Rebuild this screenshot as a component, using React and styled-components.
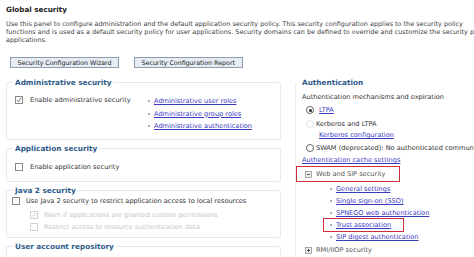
import React from "react";
import styled, { createGlobalStyle } from "styled-components";

const Global = createGlobalStyle`
  html, body {
    margin: 0;
    background: #fff;
    overflow: hidden;
  }
  body {
    font-family: "DejaVu Sans", Verdana, sans-serif;
    font-size: 6.6px;
    line-height: 8px;
    color: #333;
  }
`;

const Check = ({ checked, disabled }) => (
  <Box $disabled={disabled}>
    {checked && (
      <svg width="6" height="6" viewBox="0 0 6 6">
        <path d="M0.8 3.2 L2.3 4.7 L5.2 1" fill="none" stroke={disabled ? "#c4c4c4" : "#555"} strokeWidth="0.9" />
      </svg>
    )}
  </Box>
);

const Toggle = ({ open }) => (
  <Tog>
    <svg width="7" height="7" viewBox="0 0 7 7">
      <rect x="0.5" y="0.5" width="6" height="6" fill="#eee" stroke="#888" strokeWidth="0.7" />
      <path d="M2 3.5 H5" stroke="#333" strokeWidth="0.8" />
      {!open && <path d="M3.5 2 V5" stroke="#333" strokeWidth="0.8" />}
    </svg>
  </Tog>
);

const App = () => {
  return (
    <Page>
      <Global />
      <Title>Global security</Title>
      <Desc>
        Use this panel to configure administration and the default application security policy. This security configuration applies to the security policy
        <br />
        functions and is used as a default security policy for user applications. Security domains can be defined to override and customize the security policies for user
        <br />
        applications.
      </Desc>
      <Buttons>
        <Button>Security Configuration Wizard</Button>
        <Button>Security Configuration Report</Button>
      </Buttons>
      <Columns>
        <Left>
          <Panel $h={58}>
            <Legend>Administrative security</Legend>
            <AdminRow>
              <Item $w={133}>
                <Check checked />
                <span>Enable administrative security</span>
              </Item>
              <LinkList>
                <LinkItem><Bullet /><A>Administrative user roles</A></LinkItem>
                <LinkItem><Bullet /><A>Administrative group roles</A></LinkItem>
                <LinkItem><Bullet /><A>Administrative authentication</A></LinkItem>
              </LinkList>
            </AdminRow>
          </Panel>
          <Panel $h={34}>
            <Legend>Application security</Legend>
            <Item $top={10}>
              <Check />
              <span>Enable application security</span>
            </Item>
          </Panel>
          <Panel $h={48}>
            <Legend>Java 2 security</Legend>
            <Item $top={2} $left={-3} $gap={6}>
              <Check />
              <span>Use Java 2 security to restrict application access to local resources</span>
            </Item>
            <Item $top={6} $left={15} $gap={6} $muted>
              <Check checked disabled />
              <span>Warn if applications are granted custom permissions</span>
            </Item>
            <Item $top={4} $left={15} $gap={6} $muted>
              <Check disabled />
              <span>Restrict access to resource authentication data</span>
            </Item>
          </Panel>
          <Panel $h={20}>
            <Legend>User account repository</Legend>
          </Panel>
        </Left>
        <Right>
          <Legend>Authentication</Legend>
          <Plain $top={6}>Authentication mechanisms and expiration</Plain>
          <Radio $top={5} $gap={5}><Dot $on /><A>LTPA</A></Radio>
          <Radio $top={6} $gap={2}><Dot $faint /><span>Kerberos and LTPA</span></Radio>
          <Plain $top={3} $left={17}><A>Kerberos configuration</A></Plain>
          <Radio $top={5} $gap={2}><Dot /><span>SWAM (deprecated): No authenticated communication between servers</span></Radio>
          <Plain $top={4}><A>Authentication cache settings</A></Plain>
          <Node $top={3} $boxed><Toggle open /><span>Web and SIP security</span></Node>
          <SubList>
            <LinkItem><Bullet /><A>General settings</A></LinkItem>
            <LinkItem><Bullet /><A>Single sign-on (SSO)</A></LinkItem>
            <LinkItem><Bullet /><A>SPNEGO web authentication</A></LinkItem>
            <LinkItem $boxed><Bullet /><A>Trust association</A></LinkItem>
            <LinkItem><Bullet /><A>SIP digest authentication</A></LinkItem>
          </SubList>
          <Node $top={5}><Toggle /><span>RMI/IIOP security</span></Node>
        </Right>
      </Columns>
    </Page>
  );
};

export default App;

const Page = styled.div`
  padding: 6px 0 0 6px;
  width: 560px;
`;

const Title = styled.div`
  font-weight: bold;
  font-size: 7.2px;
  line-height: 8px;
  color: #222;
`;

const Desc = styled.p`
  margin: 6px 0 0;
  white-space: nowrap;
  font-size: 6.45px;
  line-height: 8px;
  color: #444;
`;

const Buttons = styled.div`
  display: flex;
  gap: 15px;
  margin: 13px 0 0 4px;
`;

const Button = styled.div`
  height: 9px;
  line-height: 9px;
  padding: 0 6.5px;
  border: 1px solid #8f9cad;
  background: #e6ecf3;
  font-size: 6.3px;
  color: #222;
`;

const Columns = styled.div`
  display: grid;
  grid-template-columns: 275px 1fr;
  column-gap: 14px;
  margin-top: 14px;
`;

const Left = styled.div`
  display: flex;
  flex-direction: column;
  gap: 8px;
`;

const Panel = styled.div`
  box-sizing: border-box;
  height: ${({ $h }) => $h}px;
  border: 1px solid #e9e9e9;
  border-radius: 2px;
  padding: 0 8px;
`;

const Legend = styled.div`
  width: max-content;
  margin: -4px 0 0 -2px;
  padding: 0 2px;
  background: #fff;
  font-weight: bold;
  font-size: 7.3px;
  line-height: 8px;
  color: #2e5b8a;
`;

const AdminRow = styled.div`
  display: flex;
  align-items: flex-start;
  margin-top: 9px;
`;

const Item = styled.div`
  display: flex;
  align-items: center;
  gap: ${({ $gap }) => $gap ?? 7}px;
  width: ${({ $w }) => ($w ? `${$w}px` : "auto")};
  flex-shrink: 0;
  margin: ${({ $top }) => $top || 0}px 0 0 ${({ $left }) => $left ?? 0}px;
  line-height: 8px;
  white-space: nowrap;
  color: ${({ $muted }) => ($muted ? "#c6c6c6" : "#333")};
`;

const Box = styled.span`
  display: inline-flex;
  align-items: center;
  justify-content: center;
  flex-shrink: 0;
  width: 6px;
  height: 6px;
  border: 1px solid ${({ $disabled }) => ($disabled ? "#d2d2d2" : "#8a8a8a")};
  background: #fff;
`;

const LinkList = styled.div`
  display: flex;
  flex-direction: column;
  gap: 4.5px;
  margin-top: 1px;
`;

const LinkItem = styled.div`
  display: flex;
  align-items: center;
  gap: 4px;
  line-height: 8px;
  width: max-content;
  ${({ $boxed }) =>
    $boxed &&
    `
    box-sizing: border-box;
    width: 79px;
    outline: 1.5px solid #cf2f3d;
    margin: -2px 0 -2px -6px;
    padding: 2px 0 2px 6px;
  `}
`;

const Bullet = styled.span`
  width: 2px;
  height: 2px;
  background: #a3b3c6;
`;

const A = styled.span`
  color: #3a3abf;
  text-decoration: underline;
`;

const Right = styled.div`
  border-left: 1px solid #efefef;
  padding-left: 6px;
  margin-top: 1px;
  white-space: nowrap;
`;

const Plain = styled.div`
  margin: ${({ $top }) => $top || 0}px 0 0 ${({ $left }) => $left || 0}px;
`;

const Radio = styled.div`
  display: flex;
  align-items: center;
  gap: ${({ $gap }) => $gap}px;
  margin: ${({ $top }) => $top || 0}px 0 0 4px;
`;

const Dot = styled.span`
  position: relative;
  width: 6px;
  height: 6px;
  border-radius: 50%;
  border: 1px solid ${({ $faint }) => ($faint ? "#dfe4ea" : "#666")};
  background: #fff;
  ${({ $on }) =>
    $on &&
    `
    &::after {
      content: "";
      position: absolute;
      left: 1.5px;
      top: 1.5px;
      width: 3px;
      height: 3px;
      border-radius: 50%;
      background: #222;
    }
  `}
`;

const Node = styled.div`
  display: flex;
  align-items: center;
  gap: 4px;
  margin-top: ${({ $top }) => $top || 0}px;
  padding-left: 3px;
  color: #555;
  ${({ $boxed }) =>
    $boxed &&
    `
    width: 94px;
    margin-left: -5px;
    padding: 3px 0 3px 8px;
    outline: 1.5px solid #cf2f3d;
  `}
`;

const Tog = styled.span`
  display: inline-flex;
`;

const SubList = styled.div`
  display: flex;
  flex-direction: column;
  gap: 4px;
  margin: 4px 0 0 28px;
`;
